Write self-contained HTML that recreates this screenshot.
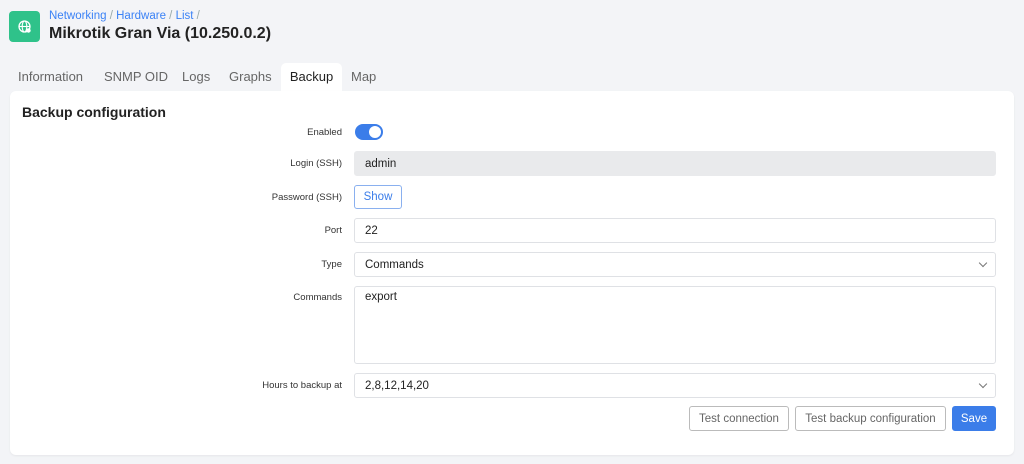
<!DOCTYPE html><html><head><style>
*{box-sizing:border-box;margin:0;padding:0}
body{width:1024px;height:464px;background:#f3f4f7;font-family:"Liberation Sans",sans-serif;position:relative;overflow:hidden;color:#212529}
.a{position:absolute}
.icon{left:9px;top:11px;width:31px;height:31px;background:#2fc28a;border-radius:4px}
.bc{left:49px;top:10px;font-size:11.5px;color:#3b82f6}
.bc span{color:#9aa}
h1{position:absolute;left:49px;top:25px;font-size:16px;font-weight:bold;color:#222}
.tab{top:63px;height:28px;line-height:28px;font-size:13px;color:#666}
.card{left:10px;top:91px;width:1004px;height:364px;background:#fff;border-radius:6px;box-shadow:0 1px 2px rgba(0,0,0,.06)}
.lbl{right:682px;font-size:9.5px;color:#333;text-align:right}
.in{left:354px;width:642px;height:25px;border:1px solid #dfe1e5;border-radius:3px;font-size:11.5px;padding-left:10px;display:flex;align-items:center;color:#222}
.chev{position:absolute;right:9px;top:7px;width:6px;height:6px;border-right:1.3px solid #777;border-bottom:1.3px solid #777;transform:rotate(45deg)}
.btn{top:406px;height:25px;border:1px solid #bbb;border-radius:3px;font-size:11.5px;color:#666;display:flex;align-items:center;justify-content:center}
</style></head><body>
<div class="a icon"><svg width="31" height="31" viewBox="0 0 31 31"><circle cx="15.5" cy="15.5" r="5.5" fill="none" stroke="#fff" stroke-width="1.3"/><ellipse cx="15.5" cy="15.5" rx="2.3" ry="5.5" fill="none" stroke="#fff" stroke-width="1.1"/><line x1="10" y1="15.5" x2="21" y2="15.5" stroke="#fff" stroke-width="1.1"/><circle cx="19.5" cy="19.5" r="2.2" fill="#fff"/></svg></div>
<div class="a bc">Networking <span>/</span> Hardware <span>/</span> List <span>/</span></div>
<h1>Mikrotik Gran Via (10.250.0.2)</h1>
<div class="a tab" style="left:18px">Information</div>
<div class="a tab" style="left:104px">SNMP OID</div>
<div class="a tab" style="left:182px">Logs</div>
<div class="a tab" style="left:229px">Graphs</div>
<div class="a tab" style="left:281px;width:61px;background:#fff;border-radius:5px 5px 0 0;text-align:center;color:#222">Backup</div>
<div class="a tab" style="left:351px">Map</div>
<div class="a card"></div>
<div class="a" style="left:22px;top:104px;font-size:14px;font-weight:bold;color:#222">Backup configuration</div>
<div class="a lbl" style="top:127px">Enabled</div>
<div class="a" style="left:355px;top:124px;width:28px;height:16px;border-radius:8px;background:#3b7de9"><div style="position:absolute;right:2px;top:2px;width:12px;height:12px;border-radius:50%;background:#fff"></div></div>
<div class="a lbl" style="top:158px">Login (SSH)</div>
<div class="a in" style="top:151px;background:#e9eaec;border-color:#e9eaec">admin</div>
<div class="a lbl" style="top:192px">Password (SSH)</div>
<div class="a" style="left:354px;top:185px;width:48px;height:24px;border:1px solid #8ab0ef;border-radius:3px;font-size:11.5px;color:#3b7de9;display:flex;align-items:center;justify-content:center">Show</div>
<div class="a lbl" style="top:225px">Port</div>
<div class="a in" style="top:218px">22</div>
<div class="a lbl" style="top:259px">Type</div>
<div class="a in" style="top:252px">Commands<div class="chev"></div></div>
<div class="a lbl" style="top:292px">Commands</div>
<div class="a in" style="top:286px;height:78px;align-items:flex-start;padding-top:4px">export</div>
<div class="a lbl" style="top:380px">Hours to backup at</div>
<div class="a in" style="top:373px">2,8,12,14,20<div class="chev"></div></div>
<div class="a btn" style="left:689px;width:100px">Test connection</div>
<div class="a btn" style="left:795px;width:151px">Test backup configuration</div>
<div class="a btn" style="left:952px;width:44px;background:#3b7de9;border-color:#3b7de9;color:#fff">Save</div>
</body></html>
